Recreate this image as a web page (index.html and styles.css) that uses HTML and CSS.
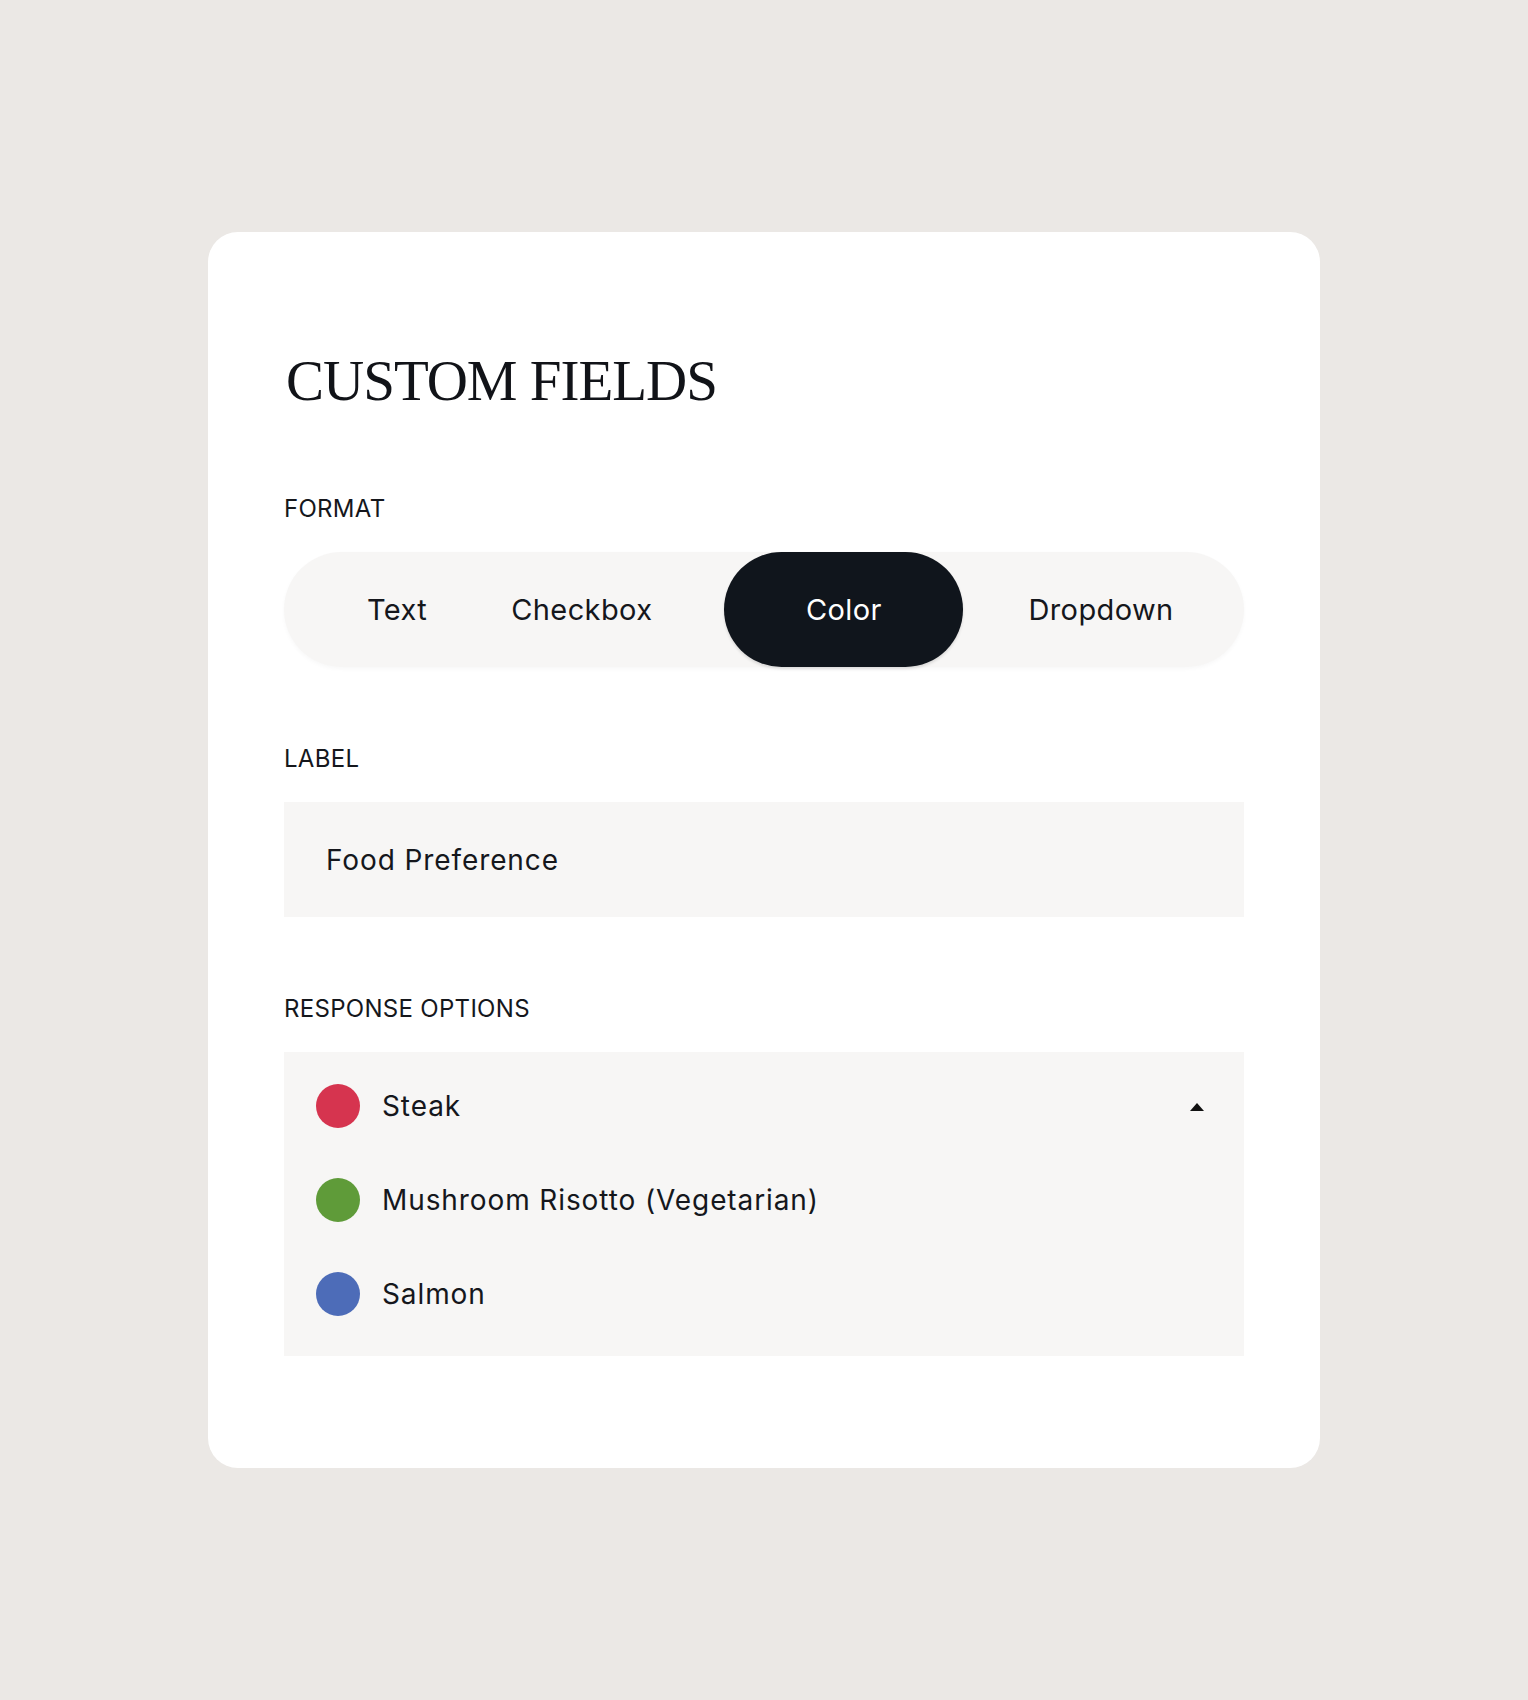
FILE: index.html
```html
<!DOCTYPE html>
<html lang="en">
<head>
<meta charset="utf-8">
<title>Custom Fields</title>
<link rel="stylesheet" href="styles.css">
</head>
<body>
<main class="page">
  <section class="card">
    <h1 class="title">CUSTOM FIELDS</h1>

    <div class="section">
      <div class="label">FORMAT</div>
      <div class="segmented">
        <button class="seg seg-text">Text</button>
        <button class="seg seg-checkbox">Checkbox</button>
        <button class="seg seg-active">Color</button>
        <button class="seg seg-dropdown">Dropdown</button>
      </div>
    </div>

    <div class="section">
      <div class="label">LABEL</div>
      <div class="input">Food Preference</div>
    </div>

    <div class="section">
      <div class="label">RESPONSE OPTIONS</div>
      <div class="options">
        <div class="option">
          <span class="dot dot-red"></span>
          <span class="option-text">Steak</span>
          <svg class="caret" width="14" height="8" viewBox="0 0 14 8"><path d="M7 0 L14 8 L0 8 Z" fill="#111"/></svg>
        </div>
        <div class="option">
          <span class="dot dot-green"></span>
          <span class="option-text">Mushroom Risotto (Vegetarian)</span>
        </div>
        <div class="option">
          <span class="dot dot-blue"></span>
          <span class="option-text">Salmon</span>
        </div>
      </div>
    </div>
  </section>
</main>
</body>
</html>
```

FILE: styles.css
```css
* { box-sizing: border-box; }

html, body {
  margin: 0;
  padding: 0;
}

body {
  background: #ebe8e5;
  font-family: Inter, "Noto Sans", sans-serif;
  color: #15171c;
}

.page {
  padding-top: 232px;
  padding-bottom: 232px;
  display: flex;
  justify-content: center;
}

.card {
  width: 1112px;
  background: #ffffff;
  border-radius: 30px;
  padding: 120px 76px 112px;
}

.title {
  margin: 0 0 88px;
  font-family: "Liberation Serif", "Times New Roman", serif;
  font-weight: 400;
  font-size: 57px;
  line-height: 1;
  letter-spacing: -1px;
  color: #111318;
  padding-left: 2px;
}

.section + .section {
  margin-top: 80px;
}

.label {
  font-size: 24px;
  line-height: 1;
  font-weight: 400;
  color: #15171c;
  margin-bottom: 31px;
  letter-spacing: 0.3px;
}

.segmented {
  height: 115px;
  background: #f7f6f5;
  border-radius: 58px;
  display: flex;
  align-items: stretch;
  padding: 0 0 0 83px;
  box-shadow: 0 2px 4px rgba(0, 0, 0, 0.03);
}

.seg {
  border: 0;
  background: transparent;
  font-family: Inter, "Noto Sans", sans-serif;
  font-size: 29px;
  letter-spacing: 0.4px;
  color: #15171c;
  padding: 0;
  display: flex;
  align-items: center;
  justify-content: center;
  cursor: pointer;
}

.seg-checkbox { margin-left: 84px; }
.seg-dropdown { margin-left: 65px; }

.seg-active {
  margin-left: 72px;
  background: #10151c;
  color: #ffffff;
  border-radius: 58px;
  width: 239px;
  box-shadow: 0 2px 3px rgba(0, 0, 0, 0.12);
}

.input {
  height: 115px;
  background: #f7f6f5;
  display: flex;
  align-items: center;
  padding-left: 42px;
  font-size: 28px;
  letter-spacing: 0.9px;
  color: #15171c;
}

.options {
  background: #f7f6f5;
  padding: 7px 40px 15px 32px;
}

.option {
  height: 94px;
  display: flex;
  align-items: center;
}

.dot {
  width: 44px;
  height: 44px;
  border-radius: 50%;
  flex: none;
  margin-right: 22px;
}

.dot-red { background: #d6344f; }
.dot-green { background: #5f9b39; }
.dot-blue { background: #4d6cb8; }

.option-text {
  font-size: 28px;
  letter-spacing: 0.9px;
  color: #15171c;
  flex: 1;
}

.caret {
  flex: none;
  margin-top: 2px;
}
```
